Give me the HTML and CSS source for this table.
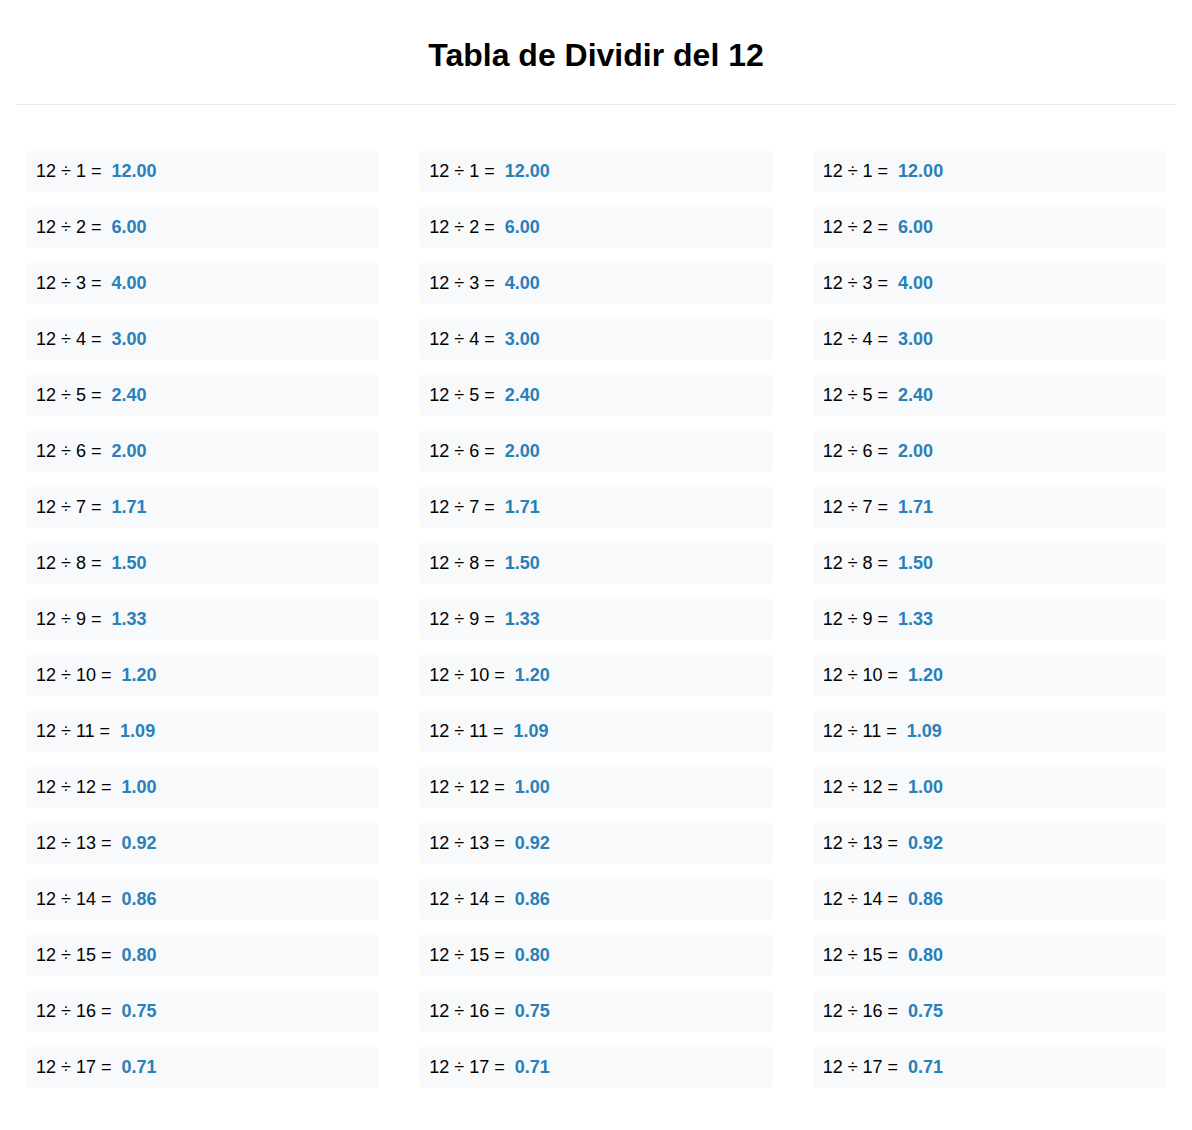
FILE: index.html
```html
<!DOCTYPE html>
<html lang="es">
<head>
<meta charset="utf-8">
<title>Tabla de Dividir del 12</title>
<link rel="stylesheet" href="styles.css">
</head>
<body>
<div class="page">
  <header class="header"><h1 class="title">Tabla de Dividir del 12</h1></header>
  <main class="grid" id="grid"></main>
</div>
<script src="script.js"></script>
</body>
</html>
```
FILE: styles.css
```css
html, body {
  margin: 0;
  padding: 0;
  background: #ffffff;
}
body {
  font-family: "Liberation Sans", Arial, Helvetica, sans-serif;
  color: #000;
}
.page {
  padding: 0 16px;
}
.header {
  padding-top: 37px;
  padding-bottom: 30px;
  border-bottom: 1px solid #ebebeb;
  text-align: center;
}
.title {
  margin: 0;
  font-size: 32px;
  font-weight: bold;
  line-height: 37px;
}
.grid {
  display: grid;
  grid-template-columns: repeat(3, 1fr);
  column-gap: 40px;
  padding: 46px 10px 40px;
}
.col {
  display: flex;
  flex-direction: column;
  gap: 15px;
}
.row {
  background: #f8f9fa;
  border-radius: 4px;
  padding: 10px 10px;
  font-size: 18px;
  line-height: 21px;
  white-space: nowrap;
}
.res {
  margin-left: 10px;
  font-weight: bold;
  color: #2980b9;
}
```
FILE: script.js
```js
(function () {
  var grid = document.getElementById('grid');
  for (var c = 0; c < 3; c++) {
    var col = document.createElement('div');
    col.className = 'col';
    for (var i = 1; i <= 17; i++) {
      var row = document.createElement('div');
      row.className = 'row';
      var lab = document.createElement('span');
      lab.className = 'lab';
      lab.textContent = '12 \u00f7 ' + i + ' =';
      var res = document.createElement('span');
      res.className = 'res';
      res.textContent = (12 / i).toFixed(2);
      row.appendChild(lab);
      row.appendChild(res);
      col.appendChild(row);
    }
    grid.appendChild(col);
  }
})();
```
